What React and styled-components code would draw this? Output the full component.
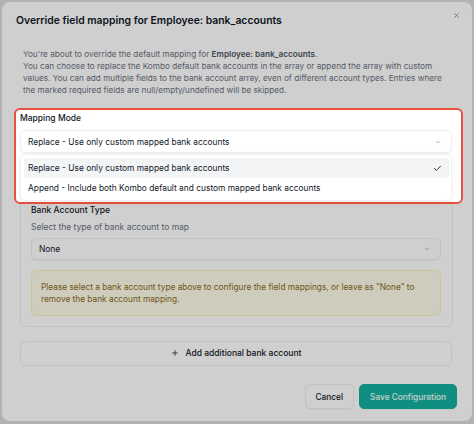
import React from "react";
import styled, { createGlobalStyle } from "styled-components";

const GlobalStyle = createGlobalStyle`
  * { box-sizing: border-box; }
  html, body { margin: 0; padding: 0; }
  body {
    background: #dcdcdc;
    font-family: Inter, "Noto Sans", "Liberation Sans", sans-serif;
    -webkit-font-smoothing: antialiased;
  }
`;

const Page = styled.div`
  width: 474px;
  height: 424px;
  padding: 2px 2px 3px 2px;
`;

// dim layer of the guided tour, everything but the spotlight sits under it
const Backdrop = styled.div`
  position: fixed;
  inset: 0;
  background: rgba(0, 0, 0, 0.19);
  z-index: 1;
`;

const Modal = styled.div`
  position: relative;
  height: 100%;
  background: #fff;
  border-radius: 8px;
  display: flex;
  flex-direction: column;
`;

const Header = styled.div`
  display: flex;
  align-items: flex-start;
  justify-content: space-between;
  padding: 11px 11px 0 14px;
`;

const Title = styled.h2`
  margin: 0;
  font-size: 10.4px;
  line-height: 16px;
  font-weight: 600;
  color: #111827;
`;

const Close = styled.button`
  border: 0;
  background: none;
  padding: 0;
  margin-top: -3px;
  width: 10px;
  height: 10px;
  display: flex;
  align-items: center;
  justify-content: center;
`;

const Body = styled.div`
  padding: 19px 20px 0 18px;
  display: flex;
  flex-direction: column;
`;

const Description = styled.p`
  margin: 0 0 16px;
  padding-left: 3px;
  font-size: 8.2px;
  line-height: 12px;
  color: #6b7280;

  strong {
    font-weight: 600;
    color: #4b5563;
  }
`;

const Field = styled.div`
  display: flex;
  flex-direction: column;
  gap: ${(p) => p.$gap ?? 6}px;
`;

const SpotField = styled(Field)`
  position: relative;
  z-index: 2;

  &::before {
    content: "";
    position: absolute;
    top: -4px;
    left: -6px;
    right: -11px;
    bottom: -51px;
    background: #fff;
    border: 2px solid #e8503f;
    border-radius: 6px;
    z-index: -1;
  }
`;

const Label = styled.div`
  font-size: 8.5px;
  line-height: 12px;
  color: ${(p) => (p.$muted ? "#6b7280" : "#111827")};
  font-weight: ${(p) => (p.$muted ? 400 : 500)};
`;

const Trigger = styled.div`
  position: relative;
  height: ${(p) => p.$h || 23}px;
  display: flex;
  align-items: center;
  justify-content: space-between;
  padding: 0 9px 0 7px;
  border: 1px solid #eceef1;
  border-radius: 5px;
  background: #fff;
  box-shadow: 0 1px 1px rgba(0, 0, 0, 0.03);
  font-size: 8.4px;
  color: #111827;
`;

const Listbox = styled.div`
  position: absolute;
  top: calc(100% + 2px);
  left: -1px;
  right: -1px;
  padding: 3px 2px 2px 3px;
  background: #fff;
  border: 1px solid #eef0f2;
  border-radius: 5px;
  box-shadow: 0 2px 6px rgba(0, 0, 0, 0.06);
  display: flex;
  flex-direction: column;
`;

const Option = styled.div`
  height: 20px;
  display: flex;
  align-items: center;
  justify-content: space-between;
  padding: 0 7px 0 4px;
  border-radius: 3px;
  font-size: 8.4px;
  color: #111827;
  background: ${(p) => (p.$active ? "#f3f4f6" : "transparent")};
`;

const Card = styled.div`
  margin-top: 10px;
  padding: 40px 11px 10px 10px;
  border: 1px solid #eceef1;
  border-radius: 6px;
  margin-right: -1px;
  display: flex;
  flex-direction: column;
`;

const Hint = styled.div`
  margin: 5px 0;
`;

const Alert = styled.div`
  margin-top: 10px;
  padding: 10px 9px 9px;
  background: #fefce8;
  border: 1px solid #fbf3c4;
  border-radius: 5px;
  font-size: 8.3px;
  line-height: 12.3px;
  color: #8a6a24;
`;

const AddButton = styled.button`
  margin-top: 14px;
  height: 25px;
  border: 1px solid #eceef1;
  border-radius: 6px;
  background: #fff;
  display: flex;
  align-items: center;
  justify-content: center;
  gap: 7px;
  font-family: inherit;
  font-size: 8.5px;
  font-weight: 500;
  color: #111827;
`;

const Footer = styled.div`
  margin-top: auto;
  display: flex;
  justify-content: flex-end;
  gap: 5px;
  padding: 0 15px 12px 0;
`;

const Button = styled.button`
  height: 25px;
  padding: 0 10px;
  border-radius: 5px;
  font-family: inherit;
  font-size: 8.3px;
  font-weight: 500;
  border: 1px solid ${(p) => (p.$primary ? "#14b09e" : "#eceef1")};
  background: ${(p) => (p.$primary ? "#14b09e" : "#fff")};
  color: ${(p) => (p.$primary ? "#f2fffd" : "#111827")};
  box-shadow: 0 1px 1px rgba(0, 0, 0, 0.03);
`;

const Chevron = () => (
  <svg width="8" height="8" viewBox="0 0 24 24" fill="none" stroke="#9ca3af" strokeWidth="2" strokeLinecap="round" strokeLinejoin="round">
    <path d="m6 9 6 6 6-6" />
  </svg>
);

const Check = () => (
  <svg width="9" height="9" viewBox="0 0 24 24" fill="none" stroke="#222" strokeWidth="2.5" strokeLinecap="round" strokeLinejoin="round">
    <path d="M20 6 9 17l-5-5" />
  </svg>
);

const Plus = () => (
  <svg width="8" height="8" viewBox="0 0 24 24" fill="none" stroke="#111827" strokeWidth="2.2" strokeLinecap="round">
    <path d="M12 5v14M5 12h14" />
  </svg>
);

const X = () => (
  <svg width="7" height="7" viewBox="0 0 24 24" fill="none" stroke="#6b7280" strokeWidth="2.5" strokeLinecap="round">
    <path d="M18 6 6 18M6 6l12 12" />
  </svg>
);

export default function App() {
  return (
    <Page>
      <GlobalStyle />
      <Backdrop />
      <Modal>
        <Header>
          <Title>Override field mapping for Employee: bank_accounts</Title>
          <Close aria-label="Close">
            <X />
          </Close>
        </Header>
        <Body>
          <Description>
            You're about to override the default mapping for <strong>Employee: bank_accounts</strong>.
            <br />
            You can choose to replace the Kombo default bank accounts in the array or append the array with custom
            values. You can add multiple fields to the bank account array, even of different account types. Entries
            where the marked required fields are null/empty/undefined will be skipped.
          </Description>

          <SpotField>
            <Label>Mapping Mode</Label>
            <Trigger>
              Replace - Use only custom mapped bank accounts
              <Chevron />
              <Listbox>
                <Option $active>
                  Replace - Use only custom mapped bank accounts
                  <Check />
                </Option>
                <Option>Append - Include both Kombo default and custom mapped bank accounts</Option>
              </Listbox>
            </Trigger>
          </SpotField>

          <Card>
            <Field $gap={0}>
              <Label>Bank Account Type</Label>
              <Hint>
                <Label $muted>Select the type of bank account to map</Label>
              </Hint>
              <Trigger $h={22}>
                None
                <Chevron />
              </Trigger>
            </Field>
            <Alert>
              Please select a bank account type above to configure the field mappings, or leave as "None" to
              remove the bank account mapping.
            </Alert>
          </Card>

          <AddButton>
            <Plus />
            Add additional bank account
          </AddButton>
        </Body>
        <Footer>
          <Button>Cancel</Button>
          <Button $primary>Save Configuration</Button>
        </Footer>
      </Modal>
    </Page>
  );
}
